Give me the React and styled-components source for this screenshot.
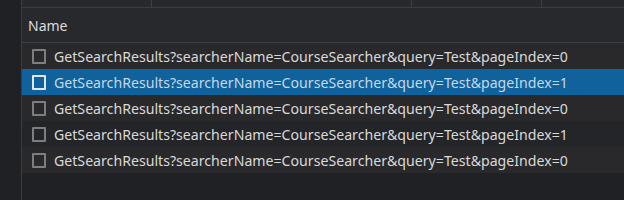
import React from "react";
import styled, { createGlobalStyle } from "styled-components";

const rows = [
  "GetSearchResults?searcherName=CourseSearcher&query=Test&pageIndex=0",
  "GetSearchResults?searcherName=CourseSearcher&query=Test&pageIndex=1",
  "GetSearchResults?searcherName=CourseSearcher&query=Test&pageIndex=0",
  "GetSearchResults?searcherName=CourseSearcher&query=Test&pageIndex=1",
  "GetSearchResults?searcherName=CourseSearcher&query=Test&pageIndex=0",
];

const App = () => {
  return (
    <>
      <GlobalStyle />
      <StPage>
        <StGutter />
        <StPanel>
          <StTopBar>
            <StTopCell $w={129} />
            <StTopCell $w={259} />
            <StTopCell $w={129} />
            <StTopCell $w={82} $last />
          </StTopBar>
          <StHeader>Name</StHeader>
          {rows.map((text, i) => (
            <StRow key={i} $selected={i === 1} $odd={i % 2 === 1}>
              <StCheck $selected={i === 1} />
              <StRowText $selected={i === 1}>{text}</StRowText>
            </StRow>
          ))}
        </StPanel>
      </StPage>
    </>
  );
};

export default App;

// styled-components
const GlobalStyle = createGlobalStyle`
  html, body {
    margin: 0;
    padding: 0;
    background: #202124;
  }
`;
const StPage = styled.div`
  display: flex;
  width: 624px;
  height: 200px;
  overflow: hidden;
  background: #202124;
  font-family: "Noto Sans", "Open Sans", sans-serif;
`;
const StGutter = styled.div`
  width: 21px;
  flex-shrink: 0;
  background: #202124;
  border-right: 1px solid #3c3d40;
`;
const StPanel = styled.div`
  flex: 1;
  display: flex;
  flex-direction: column;
  background: #202124;
`;
const StTopBar = styled.div`
  display: flex;
  height: 7px;
  background: #28292c;
  border-bottom: 1px solid #3c3d40;
`;
const StTopCell = styled.div`
  width: ${(p) => p.$w}px;
  flex-shrink: 0;
  border-right: ${(p) => (p.$last ? "none" : "1px solid #3c3d40")};
`;
const StHeader = styled.div`
  display: flex;
  align-items: center;
  height: 34px;
  padding-left: 6px;
  background: #28292c;
  border-bottom: 1px solid #3c3d40;
  color: #dcdcdc;
  font-size: 14px;
`;
const StRow = styled.div`
  display: flex;
  align-items: center;
  height: 26px;
  padding-left: 10px;
  background: ${(p) =>
    p.$selected ? "#0f629c" : p.$odd ? "#242528" : "#29292c"};
`;
const StCheck = styled.div`
  width: 10px;
  height: 11px;
  border: 2px solid ${(p) => (p.$selected ? "#e4e8ec" : "#7d7e80")};
  border-radius: 1px;
  margin-right: 8px;
  flex-shrink: 0;
`;
const StRowText = styled.span`
  color: ${(p) => (p.$selected ? "#c5d8ea" : "#d9d9d9")};
  font-size: 14.15px;
  white-space: nowrap;
`;
